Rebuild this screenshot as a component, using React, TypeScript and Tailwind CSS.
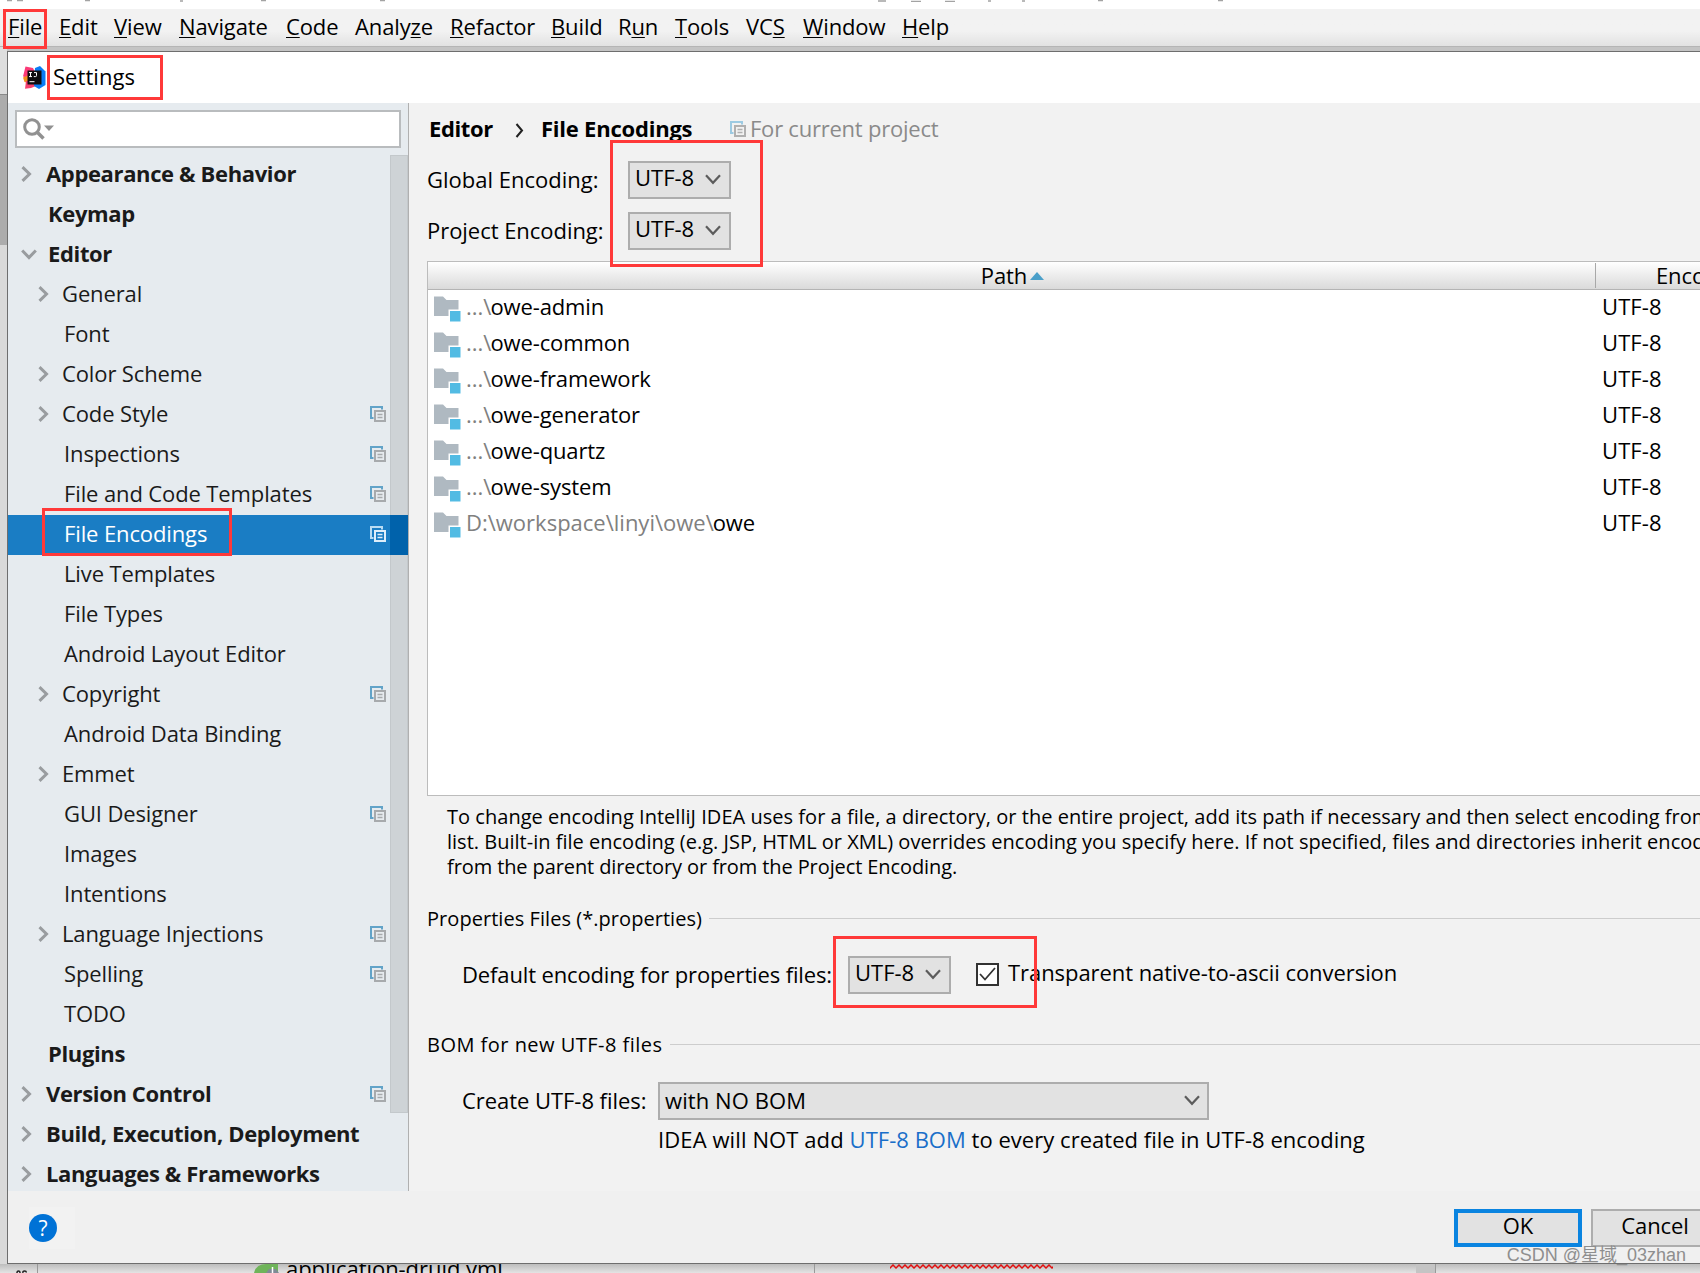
import type { ReactNode } from 'react';

type TreeItem = {
  label: string;
  level?: number;
  arrow?: 'right' | 'down';
  bold?: boolean;
  project?: boolean;
  selected?: boolean;
};

const menu = [
  { before: '', key: 'F', after: 'ile', width: 'w-[51px]' },
  { before: '', key: 'E', after: 'dit', width: 'w-[55px]' },
  { before: '', key: 'V', after: 'iew', width: 'w-[65px]' },
  { before: '', key: 'N', after: 'avigate', width: 'w-[107px]' },
  { before: '', key: 'C', after: 'ode', width: 'w-[69px]' },
  { before: 'Analy', key: 'z', after: 'e', width: 'w-[95px]' },
  { before: '', key: 'R', after: 'efactor', width: 'w-[101px]' },
  { before: '', key: 'B', after: 'uild', width: 'w-[67px]' },
  { before: 'R', key: 'u', after: 'n', width: 'w-[57px]' },
  { before: '', key: 'T', after: 'ools', width: 'w-[71px]' },
  { before: 'VC', key: 'S', after: '', width: 'w-[57px]' },
  { before: '', key: 'W', after: 'indow', width: 'w-[99px]' },
  { before: '', key: 'H', after: 'elp', width: 'w-[60px]' },
];

const tree: TreeItem[] = [
  { label: 'Appearance & Behavior', bold: true, arrow: 'right' },
  { label: 'Keymap', bold: true },
  { label: 'Editor', bold: true, arrow: 'down' },
  { label: 'General', level: 1, arrow: 'right' },
  { label: 'Font', level: 1 },
  { label: 'Color Scheme', level: 1, arrow: 'right' },
  { label: 'Code Style', level: 1, arrow: 'right', project: true },
  { label: 'Inspections', level: 1, project: true },
  { label: 'File and Code Templates', level: 1, project: true },
  { label: 'File Encodings', level: 1, project: true, selected: true },
  { label: 'Live Templates', level: 1 },
  { label: 'File Types', level: 1 },
  { label: 'Android Layout Editor', level: 1 },
  { label: 'Copyright', level: 1, arrow: 'right', project: true },
  { label: 'Android Data Binding', level: 1 },
  { label: 'Emmet', level: 1, arrow: 'right' },
  { label: 'GUI Designer', level: 1, project: true },
  { label: 'Images', level: 1 },
  { label: 'Intentions', level: 1 },
  { label: 'Language Injections', level: 1, arrow: 'right', project: true },
  { label: 'Spelling', level: 1, project: true },
  { label: 'TODO', level: 1 },
  { label: 'Plugins', bold: true },
  { label: 'Version Control', bold: true, arrow: 'right', project: true },
  { label: 'Build, Execution, Deployment', bold: true, arrow: 'right' },
  { label: 'Languages & Frameworks', bold: true, arrow: 'right' },
];

const paths = [
  { prefix: '...\\', name: 'owe-admin' },
  { prefix: '...\\', name: 'owe-common' },
  { prefix: '...\\', name: 'owe-framework' },
  { prefix: '...\\', name: 'owe-generator' },
  { prefix: '...\\', name: 'owe-quartz' },
  { prefix: '...\\', name: 'owe-system' },
  { prefix: 'D:\\workspace\\linyi\\owe\\', name: 'owe' },
];

const ProjectIcon = ({ back, front, fill }: { back: string; front: string; fill: string }) => (
  <svg width="16" height="16" viewBox="0 0 16 16" fill="none" className="shrink-0">
    <path d="M3.5 12H1V1h11v2.5" stroke={back} strokeWidth="2" />
    <rect x="5" y="5" width="10" height="10" fill={fill} stroke={front} strokeWidth="2" />
    <path d="M7.5 8.5h5M7.5 11.5h5" stroke={front} strokeWidth="1.3" />
  </svg>
);

const TreeArrow = ({ dir }: { dir: 'right' | 'down' }) =>
  dir === 'right' ? (
    <svg width="11" height="16" viewBox="0 0 11 16" fill="none">
      <path d="M1.5 1.2 8.5 8l-7 6.8" stroke="#999c9f" strokeWidth="3" />
    </svg>
  ) : (
    <svg width="16" height="11" viewBox="0 0 16 11" fill="none">
      <path d="M1.2 1.5 8 8.5l6.8-7" stroke="#999c9f" strokeWidth="3" />
    </svg>
  );

const FolderIcon = () => (
  <svg width="27" height="26" viewBox="0 0 27 26" className="shrink-0">
    <path d="M0 .5h9L12.500 4H24.500v16H0z" fill="#afb9c1" />
    <path d="M14.500 13.500H27V26H14.500z" fill="#fff" />
    <path d="M16 15h10.500v10.500H16z" fill="#52bbe3" />
  </svg>
);

const AppLogo = () => (
  <svg width="23" height="23" viewBox="0 0 23 23" className="shrink-0">
    <path d="M2.5.5 10 2l2 4-6 6-6-1.500z" fill="#fb3a77" />
    <path d="M0 11.500 6 9v8l-4.500-1z" fill="#f78f1e" />
    <path d="M3 15h9l1 5-5 2-6 .8z" fill="#f6406e" />
    <path d="m12 2 5-2 5.500 5.500V19L16 23l-5-3z" fill="#0a7cf5" />
    <rect x="4.500" y="4.500" width="14" height="14" fill="#0c0c10" />
    <path d="M6 6.600h3M7.500 6.600v4M6 10.600h3M11 6.600h2.500v3q0 1-1 1H10.800M6.500 15.700h5" stroke="#fff" strokeWidth="1" fill="none" />
  </svg>
);

const Chevron = () => (
  <svg width="16" height="11" viewBox="0 0 16 11" fill="none" className="-mt-px shrink-0">
    <path d="M1 1.300 8 8.800l7-7.500" stroke="#5c5c5c" strokeWidth="2.200" />
  </svg>
);

const Select = ({ className, children }: { className: string; children: ReactNode }) => (
  <div className={`flex h-[38px] items-center justify-between border-2 border-[#adadad] bg-[#e2e2e2] pl-[5px] ${className}`}>
    <span className="-mt-1.5 tracking-normal">{children}</span>
    <Chevron />
  </div>
);

// Red frame around the spot the reader should look at
const Mark = ({ className }: { className: string }) => (
  <div className={`pointer-events-none absolute z-20 border-[3px] border-[#ff3939] ${className}`} />
);

const Sidebar = () => (
  <aside className="relative flex w-[401px] shrink-0 flex-col overflow-hidden border-r border-[#b0b0b0] bg-[#e6ebef] text-[#1a1a1a]">
    <div className="mt-[7px] ml-[7px] flex h-[38px] w-[386px] shrink-0 items-center border-2 border-[#b9bcbe] bg-white pl-1.5">
      <svg width="31" height="22" viewBox="0 0 31 22" fill="none">
        <circle cx="9" cy="9" r="7.300" stroke="#919191" strokeWidth="3" />
        <path d="m14.500 14.500 6 6" stroke="#919191" strokeWidth="3.600" />
        <path d="M21 7.500h10l-5 5.500z" fill="#919191" />
      </svg>
    </div>
    <ul className="mt-[7px]">
      {tree.map((item) => (
        <li
          key={item.label}
          className={`flex h-10 items-center pb-0.5 ${item.selected ? 'bg-[#1a7dc4] text-white' : ''} ${item.level ? 'pl-[30px]' : 'pl-[13px]'}`}
        >
          <span className={`flex shrink-0 ${item.arrow === 'right' ? (item.level ? 'w-6' : 'w-[25px]') : item.level ? 'w-[26px]' : 'w-[27px]'}`}>
            {item.arrow && <TreeArrow dir={item.arrow} />}
          </span>
          <span className={`-mt-0.5 flex-1 whitespace-nowrap ${item.bold ? 'font-bold tracking-[-0.360px]' : ''}`}>{item.label}</span>
          {item.project && (
            <span className="mr-[22px]">
              {item.selected ? (
                <ProjectIcon back="#b9dcf3" front="#dfeefa" fill="#1a7dc4" />
              ) : (
                <ProjectIcon back="#62a3c8" front="#a7aaad" fill="#e6ebef" />
              )}
            </span>
          )}
        </li>
      ))}
    </ul>
    <div className="absolute top-[52px] right-0 h-[958px] w-[18px] border border-black/5 bg-black/10" />
    <div className="absolute top-[412px] right-0 h-10 w-[18px] bg-[#0062ab]" />
  </aside>
);

const PathTable = () => (
  <div className="ml-[18px] flex h-[535px] flex-col border border-r-0 border-[#bcbcbc] bg-white">
    <div className="flex h-7 shrink-0 items-center border-b border-[#b4b4b4] bg-gradient-to-b from-white to-[#dadada]">
      <div className="flex h-[25px] w-[1168px] shrink-0 items-center justify-center gap-[3px] border-r border-[#a8a8a8] pl-0.5">
        <span className="-mt-0.5">Path</span>
        <svg width="14" height="8" viewBox="0 0 14 8">
          <path d="M7 0l7 8H0z" fill="#4a9fc9" />
        </svg>
      </div>
      <span className="-mt-0.5 ml-[60px]">Encoding</span>
    </div>
    {paths.map((path) => (
      <div key={path.name} className="flex h-9 shrink-0 items-center pb-1">
        <div className="flex w-[1174px] shrink-0 items-center pl-1.5">
          <span className="mt-1.5 flex">
            <FolderIcon />
          </span>
          <span className="ml-[5px] tracking-normal text-[#808080]">{path.prefix}</span>
          <span className="-ml-px">{path.name}</span>
        </div>
        <span className="tracking-[0.100px]">UTF-8</span>
      </div>
    ))}
  </div>
);

const Content = () => (
  <main className="flex w-[1291px] shrink-0 flex-col bg-[#f2f2f2]">
    <div className="ml-5 flex h-[50px] items-center font-bold">
      <span className="w-[86px] tracking-[-0.400px]">Editor</span>
      <svg width="9" height="15" viewBox="0 0 9 15" fill="none" className="mt-1 mr-[17px]">
        <path d="M1.500 1 7 7.500 1.500 14" stroke="#222" strokeWidth="2" />
      </svg>
      <span className="w-[189px] tracking-[-0.220px]">File Encodings</span>
      <span className="mt-0.5 flex">
        <ProjectIcon back="#9ccae2" front="#b0b0b0" fill="#f2f2f2" />
      </span>
      <span className="ml-1 font-normal tracking-[-0.230px] text-[#8a8a8a]">For current project</span>
    </div>

    <div className="ml-[18px] flex flex-col gap-[13px] pt-2">
      <div className="flex h-[38px] items-center">
        <span className="-mt-0.5 w-[201px] tracking-normal">Global Encoding:</span>
        <Select className="w-[103px] pr-2">UTF-8</Select>
      </div>
      <div className="flex h-[38px] items-center">
        <span className="-mt-0.5 w-[201px] tracking-[-0.040px]">Project Encoding:</span>
        <Select className="w-[103px] pr-2">UTF-8</Select>
      </div>
    </div>

    <div className="h-[11px]" />
    <PathTable />

    <div className="mt-2 ml-[38px] text-[20px] leading-[25px] whitespace-nowrap">
      <p className="tracking-[0.030px]">
        To change encoding IntelliJ IDEA uses for a file, a directory, or the entire project, add its path if necessary and then select encoding from
      </p>
      <p className="tracking-[0.010px]">
        list. Built-in file encoding (e.g. JSP, HTML or XML) overrides encoding you specify here. If not specified, files and directories inherit encoding
      </p>
      <p className="tracking-[-0.100px]">from the parent directory or from the Project Encoding.</p>
    </div>

    <div className="mt-6 ml-[18px] flex h-[32px] items-center gap-[7px]">
      <span className="text-[20px] tracking-[0.050px]">Properties Files (*.properties)</span>
      <div className="-mt-0.5 h-px flex-1 bg-[#cdcdcd]" />
    </div>
    <div className="mt-[21px] ml-[53px] flex h-[38px] items-center">
      <span className="-mt-0.5 w-[386px] tracking-[-0.140px]">Default encoding for properties files:</span>
      <Select className="w-[103px] pr-2">UTF-8</Select>
      <div className="-mt-0.5 ml-[25px] flex size-[23px] items-center justify-center border-2 border-[#333] bg-white">
        <svg width="17" height="14" viewBox="0 0 17 14" fill="none">
          <path d="m1 7 5 5.500L16 1" stroke="#333" strokeWidth="1.800" />
        </svg>
      </div>
      <span className="-mt-1.5 ml-[9px] tracking-[-0.060px]">Transparent native-to-ascii conversion</span>
    </div>

    <div className="mt-[35px] ml-[18px] flex h-[32px] items-center gap-[7px]">
      <span className="text-[20px] tracking-[0.480px]">BOM for new UTF-8 files</span>
      <div className="-mt-0.5 h-px flex-1 bg-[#cdcdcd]" />
    </div>
    <div className="mt-[21px] ml-[53px] flex h-[38px] items-center">
      <span className="-mt-0.5 w-[196px] tracking-[-0.050px]">Create UTF-8 files:</span>
      <div className="flex h-[38px] w-[551px] items-center justify-between border-2 border-[#adadad] bg-[#e2e2e2] pr-[7px] pl-[5px]">
        <span className="-mt-0.5 tracking-[0.080px]">with NO BOM</span>
        <Chevron />
      </div>
    </div>
    <p className="mt-1 ml-[249px] h-8 tracking-[0.030px]">
      <span className="tracking-[0.100px]">IDEA will NOT add </span>
      <span className="text-[#1a6fc9]">UTF-8 BOM</span> to every created file in UTF-8 encoding
    </p>
  </main>
);

const Footer = () => (
  <footer className="flex h-[72px] shrink-0 items-center justify-between bg-[#f0f0f0] pt-0.5">
    <div className="ml-[21px] flex h-[42px] w-[46px] items-center bg-[#f2f2f2]">
      <div className="flex size-7 items-center justify-center rounded-full bg-[#0072d6] text-[21px] text-white">?</div>
    </div>
    <div className="flex w-[246px] shrink-0 gap-[9px]">
      <button className="h-[38px] w-[128px] shrink-0 border-4 border-[#0a84e0] bg-[#e2e2e2] pb-1.5 leading-none">OK</button>
      <button className="h-[38px] w-[128px] shrink-0 border-2 border-[#adadad] bg-[#e2e2e2] pb-1.5 leading-none tracking-[-0.100px]">Cancel</button>
    </div>
  </footer>
);

const App = () => {
  return (
    <div className="relative flex h-[1273px] w-[1700px] flex-col overflow-hidden bg-[#dcdcdc] font-['Open_Sans',sans-serif] text-[22px] leading-[30px] tracking-[-0.120px] text-black">
      {/* Title bar of the IDE window, cut off at the top */}
      <div className="h-[9px] shrink-0 overflow-hidden bg-white">
        <svg width="1260" height="2" viewBox="0 0 1260 2">
          <path
            d="M7 .5h5M17 .5h6M85 .5h5M180 1h3M261 .5h5M380 .5h5M878 1h8M911 1.500h10M945 1.500h10M988 1h3M1022 1h3M1098 .5h5M1218 .5h5"
            stroke="#a3a3a3"
            strokeWidth="1.500"
          />
        </svg>
      </div>

      {/* Menu bar */}
      <nav className="flex h-[38px] shrink-0 items-center border-b border-[#b5b5b5] bg-gradient-to-b from-[#f2f2f2] from-60% to-[#e2e2e2] pb-[3px] pl-2">
        {menu.map((item) => (
          <span key={item.before + item.key + item.after} className={`shrink-0 ${item.width}`}>
            {item.before}
            <span className="underline decoration-1 underline-offset-2">{item.key}</span>
            {item.after}
          </span>
        ))}
      </nav>

      <div className="flex h-[1217px] shrink-0">
        {/* Strip of the IDE behind the dialog */}
        <div className="flex w-[7px] shrink-0 flex-col bg-[#d9d9d9]">
          <div className="h-[48px] border-b border-[#8a8a8a] bg-[#dedede]" />
          <div className="h-[150px] bg-[#acacac]" />
        </div>
        {/* Settings dialog */}
        <div className="flex flex-1 flex-col overflow-hidden bg-[#c4c4c4] pt-1">
          <div className="flex h-[1213px] w-[1693px] flex-col border border-r-0 border-[#6e6e6e]">
            <header className="flex h-[51px] shrink-0 items-center bg-white pl-[15px]">
              <AppLogo />
              <span className="-mt-[3px] ml-[7px] tracking-[0.050px]">Settings</span>
            </header>
            <div className="flex h-[1088px] shrink-0">
              <Sidebar />
              <Content />
            </div>
            <Footer />
          </div>
        </div>
      </div>

      {/* Editor and project tree behind the dialog, cut off at the bottom */}
      <div className="flex h-[9px] shrink-0 overflow-hidden bg-gradient-to-b from-[#bdbdbd] to-[#e4e4e4]">
        <div className="w-[38px] shrink-0 border-r border-[#999] pl-4">
          <svg width="12" height="9" viewBox="0 0 12 9" fill="none">
            <path d="M1 9V8.500q0-1.500 1.500-1.500T4 8.500V9M7 9q-.5-2 1.500-2T10 8.500" stroke="#222" strokeWidth="1.500" />
          </svg>
        </div>
        <svg width="25" height="9" viewBox="0 0 25 9" className="ml-[216px] shrink-0">
          <path d="M0 9Q2 0 12 0h12v9z" fill="#6fb45a" />
          <path d="m12 9 3-4h7l3 4z" fill="#7f8b96" />
          <path d="M18.500 3v6" stroke="#fff" strokeWidth="1.500" />
        </svg>
        <span className="-mt-[11px] ml-[7px] w-[528px] shrink-0 tracking-[-0.050px]">application-druid.yml</span>
        <div className="w-[76px] shrink-0 border-l border-[#999]" />
        <svg width="163" height="5" viewBox="0 0 163 5" fill="none" className="shrink-0">
          <defs>
            <pattern id="squiggle" width="6" height="5" patternUnits="userSpaceOnUse">
              <path d="m-1 5 4-4 4 4" stroke="#e01010" strokeWidth="1.500" />
            </pattern>
          </defs>
          <rect width="163" height="5" fill="url(#squiggle)" />
        </svg>
        <div className="ml-[363px] w-[20px] shrink-0 border-r border-[#999] bg-[#c4c4c4]" />
      </div>

      <Mark className="top-[9px] left-[3px] h-10 w-11" />
      <Mark className="top-[55px] left-[47px] h-[45px] w-[116px]" />
      <Mark className="top-[140px] left-[610px] h-[127px] w-[153px]" />
      <Mark className="top-[508px] left-[42px] h-12 w-[190px]" />
      <Mark className="top-[936px] left-[833px] h-[72px] w-[204px]" />

      <div className="absolute right-[14px] bottom-[5px] z-20 font-['Liberation_Sans','Noto_Sans_CJK_SC',sans-serif] text-[18px] leading-[26px] tracking-normal text-[#8e8e8e]">
        CSDN @星域_03zhan
      </div>
    </div>
  );
};

export default App;
